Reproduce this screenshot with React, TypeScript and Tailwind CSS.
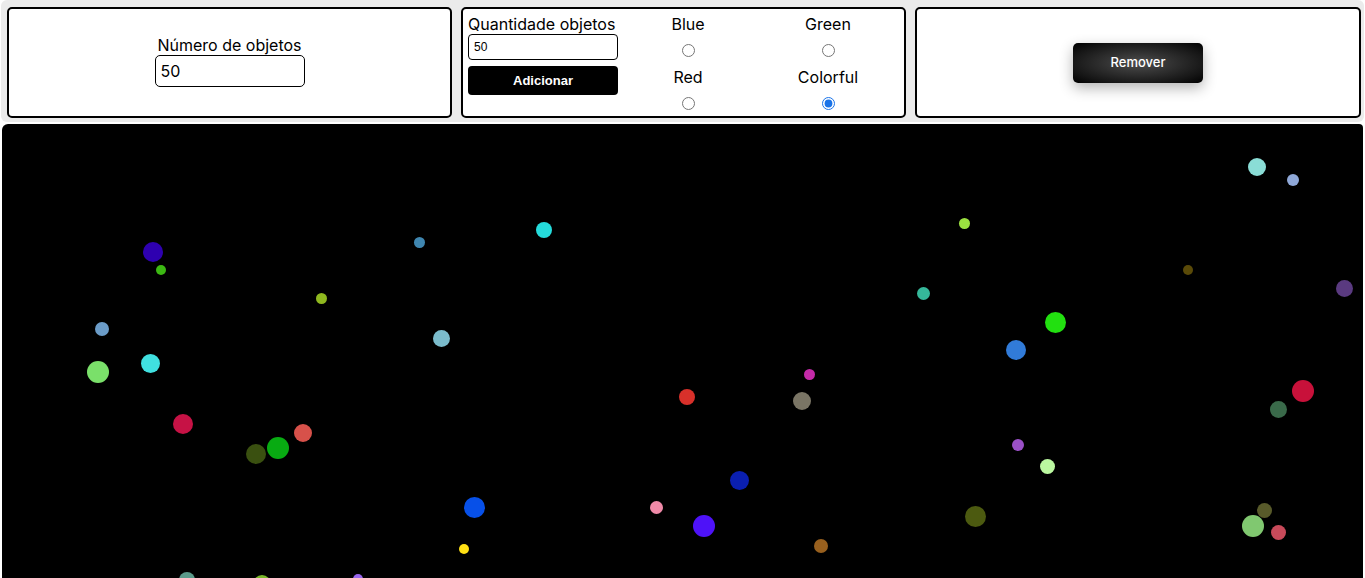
import { useState } from "react";

// bolinhas do canvas: centro (x, y) na página, diâmetro d e cor
const balls = [
  { x: 152.7, y: 252, d: 20, c: "#2e00b0" },
  { x: 161, y: 270, d: 10, c: "#3cb813" },
  { x: 419.3, y: 242.3, d: 11, c: "#3f86b0" },
  { x: 543.7, y: 230, d: 16, c: "#25dcdc" },
  { x: 321.3, y: 298.3, d: 11, c: "#8fb81f" },
  { x: 102, y: 329, d: 14, c: "#6b9cc8" },
  { x: 441.3, y: 338.3, d: 17, c: "#7bbccc" },
  { x: 150.3, y: 363.3, d: 19, c: "#40e0e0" },
  { x: 98, y: 372, d: 22, c: "#7ae06a" },
  { x: 183, y: 423.7, d: 20, c: "#c61245" },
  { x: 256, y: 453.7, d: 20, c: "#3a5010" },
  { x: 278, y: 448, d: 22, c: "#08ab12" },
  { x: 303, y: 432.7, d: 18, c: "#d7514a" },
  { x: 474.3, y: 507.3, d: 21, c: "#0750e8" },
  { x: 464, y: 548.7, d: 10, c: "#ffe014" },
  { x: 186.7, y: 580, d: 16, c: "#5a9a8a" },
  { x: 262.3, y: 584, d: 18, c: "#7ab82a" },
  { x: 357.7, y: 579, d: 10, c: "#9966ee" },
  { x: 1016, y: 350, d: 20, c: "#317bd8" },
  { x: 809.3, y: 374.3, d: 11, c: "#c42aa8" },
  { x: 687, y: 397, d: 16, c: "#d8302a" },
  { x: 801.7, y: 401, d: 18, c: "#7a7565" },
  { x: 1017.7, y: 445, d: 12, c: "#9a50c6" },
  { x: 1047.3, y: 466.3, d: 15, c: "#bbf8a0" },
  { x: 739.3, y: 480.3, d: 19, c: "#0a1fb0" },
  { x: 656.3, y: 507.3, d: 13, c: "#f08aa8" },
  { x: 704, y: 526, d: 22, c: "#4e12f8" },
  { x: 975.3, y: 516.3, d: 21, c: "#4c5a10" },
  { x: 821, y: 545.7, d: 14, c: "#98601e" },
  { x: 1256.7, y: 166.7, d: 18, c: "#8addd6" },
  { x: 1293, y: 180, d: 12, c: "#8fa8d8" },
  { x: 964.3, y: 223.3, d: 11, c: "#9be040" },
  { x: 1187.7, y: 269.7, d: 10, c: "#5a4a08" },
  { x: 1344.3, y: 288.3, d: 17, c: "#5a3a80" },
  { x: 923.3, y: 293.3, d: 13, c: "#35b89a" },
  { x: 1055.3, y: 322.3, d: 21, c: "#22e010" },
  { x: 1302.7, y: 390.7, d: 22, c: "#c8113a" },
  { x: 1278.3, y: 409.3, d: 17, c: "#3a6a4a" },
  { x: 1264.3, y: 510.3, d: 15, c: "#585a2a" },
  { x: 1252.7, y: 526, d: 22, c: "#80c870" },
  { x: 1278.3, y: 532.3, d: 15, c: "#c84a5a" },
];

const colors = ["Blue", "Green", "Red", "Colorful"];

export default function App() {
  const [color, setColor] = useState("Colorful");
  const [total, setTotal] = useState("50");
  const [qtd, setQtd] = useState("50");

  return (
    <div className="h-[578px] overflow-hidden bg-white font-['Inter','Liberation_Sans',sans-serif] text-black">
      {/* painel de controles */}
      <div className="mx-px h-[122px] rounded-[6px] bg-[#ebebeb] pt-[7px] pb-[4px] pl-[6px] pr-[4px] grid grid-cols-[445px_445px_446px] gap-[9px]">
        <div className="h-[111px] rounded-[5px] border-2 border-black bg-white flex flex-col items-center justify-center pb-[3px]">
          <label className="text-base leading-[19px]">Número de objetos</label>
          <input
            value={total}
            onChange={(e) => setTotal(e.target.value)}
            className="w-[150px] h-[32px] rounded-[5px] border border-black px-[5px] text-base outline-none"
          />
        </div>

        <div className="h-[111px] rounded-[5px] border-2 border-black bg-white pt-[6px] pl-[5px] grid grid-cols-[150px_140px_140px]">
          <div className="flex flex-col">
            <label className="text-base leading-[19px]">Quantidade objetos</label>
            <input
              value={qtd}
              onChange={(e) => setQtd(e.target.value)}
              className="w-[150px] h-[26px] rounded-[4px] border border-black px-[5px] text-[12px] font-['Liberation_Sans',sans-serif] outline-none"
            />
            <button className="mt-[6px] w-[150px] h-[29px] rounded-[4px] bg-black text-white text-[13px] font-bold font-['Liberation_Sans',sans-serif]">
              Adicionar
            </button>
          </div>
          {[0, 1].map((col) => (
            <div key={col} className="flex flex-col">
              {[colors[col], colors[col + 2]].map((name) => (
                <label key={name} className="h-[53px] flex flex-col items-center">
                  <span className="text-base leading-[19px]">{name}</span>
                  <input
                    type="radio"
                    name="cor"
                    checked={color === name}
                    onChange={() => setColor(name)}
                    className="mt-[10px] w-[13px] h-[13px] accent-[#1a73e8]"
                  />
                </label>
              ))}
            </div>
          ))}
        </div>

        <div className="h-[111px] rounded-[5px] border-2 border-black bg-white flex items-center justify-center">
          <button className="w-[130px] h-[40px] rounded-[5px] bg-[radial-gradient(ellipse_at_center,#4d4d4d_0%,#151515_75%,#000_100%)] text-white text-[13px] font-medium shadow-[0_5px_14px_rgba(0,0,0,0.3)]">
            Remover
          </button>
        </div>
      </div>

      {/* canvas */}
      <div className="relative mx-[2px] mt-[2px] h-[520px] rounded-tl-[6px] rounded-tr-[4px] bg-black overflow-hidden">
        {balls.map((b, i) => (
          <div
            key={i}
            className="absolute rounded-full"
            style={{
              left: b.x - 2 - b.d / 2,
              top: b.y - 124 - b.d / 2,
              width: b.d,
              height: b.d,
              background: b.c,
            }}
          />
        ))}
      </div>
    </div>
  );
}
